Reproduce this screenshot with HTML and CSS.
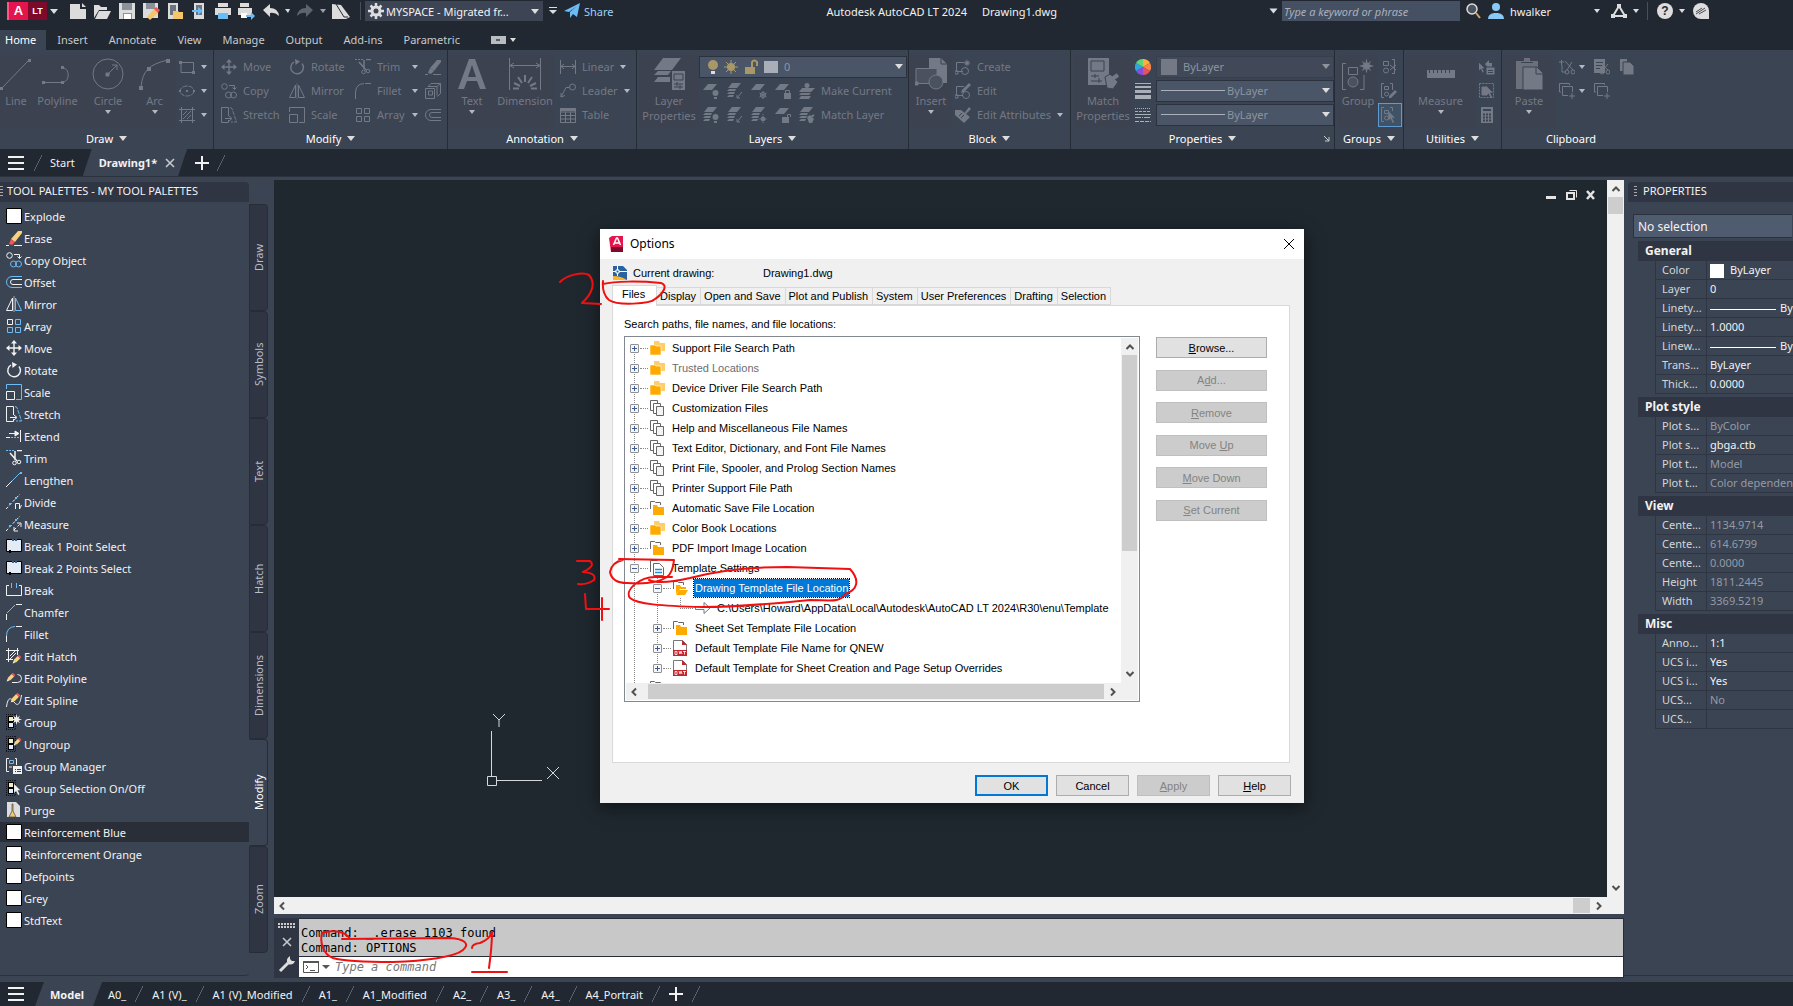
FILE: index.html
```html
<!DOCTYPE html>
<html lang="en">
<head>
<meta charset="utf-8">
<title>Autodesk AutoCAD LT 2024 - Drawing1.dwg</title>
<link rel="stylesheet" href="styles.css">
</head>
<body>
<svg class="defs" aria-hidden="true">
  <symbol id="erase" viewBox="0 0 16 16"><path d="M5 9 12 1l4 0v2L9 12z" fill="var(--pencil)" stroke="none"/><path d="M5 9l4 3-3 3-3-1z" fill="var(--tip)" stroke="none"/><path d="M0 15.500h3M8 15.500h8"/></symbol>
  <symbol id="copy" viewBox="0 0 16 16"><circle cx="3.500" cy="3.500" r="2.800"/><path d="M8 2.500h5.500V6M11.500 4.500l2 2 2-2"/><g stroke="var(--blue)"><circle cx="7.500" cy="12" r="3"/><circle cx="12.500" cy="12" r="3"/></g></symbol>
  <symbol id="offset" viewBox="0 0 16 16"><path d="M16 2.500H6a5.500 5.500 0 0 0 0 11h10" stroke="var(--blue)"/><path d="M16 5.500H7a2.500 2.500 0 0 0 0 5h9"/></symbol>
  <symbol id="mirror" viewBox="0 0 16 16"><path d="M6.500 2v12.500h-6z"/><path d="M9.500 2v12.500h6z" stroke="var(--blue)"/><path d="M8 0v16" stroke-width=".6"/></symbol>
  <symbol id="array" viewBox="0 0 16 16"><path d="M1.500 1.500h5v5h-5z"/><path d="M9.500 1.500h5v5h-5zM1.500 9.500h5v5h-5zM9.500 9.500h5v5h-5z" stroke="var(--blue)"/></symbol>
  <symbol id="move" viewBox="0 0 16 16"><path d="M8 2v12M2 8h12" stroke-width="1.400"/><path d="M8 0l3 3.500H5zM8 16l3-3.500H5zM0 8l3.500-3v6zM16 8l-3.500-3v6z" fill="currentColor" stroke="none"/></symbol>
  <symbol id="rotate" viewBox="0 0 16 16"><path d="M5 3a6.300 6.300 0 1 0 8 1.500" stroke-width="1.400"/><path d="M6 0l5 2.500L6.500 6z" fill="currentColor" stroke="none"/></symbol>
  <symbol id="scale" viewBox="0 0 16 16"><path d="M.5 5V.5h15v15H10" stroke="var(--blue)"/><path d="M.5 7.500h8v8h-8z"/></symbol>
  <symbol id="stretch" viewBox="0 0 16 16"><path d="M7.500 9V.5h-7v15h7V13M4 11.500h6M8 9l3 2.500L8 14"/><path d="M9 .5l2 1 4.500 13.500H10" stroke="var(--blue)" stroke-dasharray="4 1"/></symbol>
  <symbol id="extend" viewBox="0 0 16 16"><path d="M14.500 2v12M3 5.500h7M0 9.500h4"/><path d="M9 3l4 2.500L9 8z" fill="currentColor"/><path d="M5 9.500h8" stroke="var(--blue)" stroke-dasharray="2 1"/></symbol>
  <symbol id="trim" viewBox="0 0 16 16"><path d="M0 .5h8" stroke="var(--blue)" stroke-dasharray="2 1"/><path d="M11 .5h5M4 3l7 8M9 1v9" stroke-width="1.500"/><circle cx="8.500" cy="13" r="1.800"/><circle cx="13" cy="12" r="1.800"/></symbol>
  <symbol id="lengthen" viewBox="0 0 16 16"><path d="M0 15l6-6"/><path d="M6 9l8-8" stroke="var(--blue)"/><path d="M14 0h2v2h-2z" fill="var(--blue)" stroke="none"/></symbol>
  <symbol id="divide" viewBox="0 0 16 16"><path d="M0 15L14 0" stroke-dasharray="3 2"/><path d="M9 3h2v2H9zM3 9h2v2H3z" fill="var(--blue)" stroke="none"/><path d="M9.500 15V9.500h4V15l2-4"/></symbol>
  <symbol id="measure-pt" viewBox="0 0 16 16"><path d="M0 15L14 0M8 14l7-7" stroke-dasharray="3 2"/><path d="M9 3h2v2H9zM3 9h2v2H3z" fill="var(--blue)" stroke="none"/><path d="M8 11v4h4M11 7h4v4"/></symbol>
  <symbol id="script" viewBox="0 0 16 16"><path d="M.5 1.500h15v12H.5z" fill="#e3ecf5" stroke="#000"/><path d="M6 1h2v2H6zM9 1h2v2H9z" fill="#31628f" stroke="none"/><path d="M3 12h2v3H3z" fill="#000" stroke="none"/></symbol>
  <symbol id="break" viewBox="0 0 16 16"><path d="M3 3.500H.5v10h15v-10H13"/><path d="M5.500 1v5M10.500 1v5" stroke="var(--blue)"/></symbol>
  <symbol id="chamfer" viewBox="0 0 16 16"><path d="M.5 16v-6M10 .5h6"/><path d="M1 9l8-8" stroke="var(--blue)"/></symbol>
  <symbol id="fillet" viewBox="0 0 16 16"><path d="M.5 16v-6M10 .5h6"/><path d="M.5 10Q.5 1 9 .5" stroke="var(--blue)"/></symbol>
  <symbol id="pencil" viewBox="0 0 16 16"><path d="M2 14l1-5 6-6 4 4-6 6z" fill="var(--pencil)" stroke="none"/><path d="M9 3l2-2 4 4-2 2z" fill="var(--tip)" stroke="none"/><path d="M1 15l1.500-3.500L5 14z" fill="currentColor" stroke="none"/></symbol>
  <symbol id="edit-hatch" viewBox="0 0 16 16"><path d="M2.500 0v14M0 2.500h13M11.500 0v7M0 11.500h7M4 8l5-5M4 11l6-6"/><use href="#pencil" x="6" y="6" width="10" height="10"/></symbol>
  <symbol id="edit-poly" viewBox="0 0 16 16"><path d="M6 12.500h5.500a4 4 0 0 0 0-8"/><use href="#pencil" x="0" y="2" width="10" height="10"/></symbol>
  <symbol id="edit-spline" viewBox="0 0 16 16"><path d="M.5 15C2 4 5 6 8 10s6 4 7.500-7"/><use href="#pencil" x="4" y="0" width="11" height="11"/></symbol>
  <symbol id="groupbase" viewBox="0 0 16 16"><path d="M0 .5h10M0 15.500h10M.5 0v16M9.500 0v16" stroke="#11151b" stroke-dasharray="1 1"/><path d="M2 2h6v12H2z" fill="#000" stroke="none"/><path d="M3 3h4v4H3z" fill="#f4ecc0" stroke="none"/><path d="M3 9h4v4H3z" fill="#dfeefa" stroke="none"/></symbol>
  <symbol id="star" viewBox="0 0 16 16"><path d="M8 0l1.300 5L13 2.500 11 6.500l5 1.500-5 1.500 2 4L9.300 11 8 16l-1.300-5L3 13.500l2-4L0 8l5-1.500-2-4L6.700 5z" fill="currentColor" stroke="none"/></symbol>
  <symbol id="cursor" viewBox="0 0 16 16"><path d="M3 0v13l3-3 3 6 2-1-3-6h4z" fill="currentColor" stroke="none"/></symbol>
  <symbol id="grp" viewBox="0 0 16 16"><use href="#groupbase"/><use href="#star" x="5" y="0" width="11" height="11"/></symbol>
  <symbol id="ungrp" viewBox="0 0 16 16"><use href="#groupbase"/><use href="#pencil" x="7" y="0" width="9" height="11"/></symbol>
  <symbol id="grpman" viewBox="0 0 16 16"><path d="M3 .5H.5v13H3M9 .5h1.500V7"/><path d="M3.500 2.500h4v3h-4z" stroke="var(--blue)"/><path d="M3 9h3"/><path d="M7 8h9v8H7z" fill="currentColor" stroke="none"/><path d="M9 11.500h1M11 11.500h4M9 13.500h1M11 13.500h4" stroke="#3b4453"/></symbol>
  <symbol id="grpsel" viewBox="0 0 16 16"><use href="#groupbase"/><use href="#cursor" x="6" y="4" width="11" height="11"/></symbol>
  <symbol id="purge" viewBox="0 0 16 16"><path d="M1 0h9l4 4v11H1z" fill="#ddd" stroke="none"/><path d="M6 2v7l-3 6h7L7 9V2z" fill="#f6c667" stroke="#3b4453" stroke-width=".7"/></symbol>
  <symbol id="swatch" viewBox="0 0 16 16"><path d="M.5.5h15v15H.5z" fill="#fff" stroke="#000"/></symbol>

  <symbol id="line" viewBox="0 0 32 32"><path d="M1 31L29 2"/><path d="M0 29h3v3H0zM28 1h3v3h-3z" fill="currentColor" stroke="none"/></symbol>
  <symbol id="polyline" viewBox="0 0 32 32"><path d="M1 24.500h20a8 8 0 0 0 0-15"/><path d="M0 23h3v3H0zM19 23h3v3h-3zM19 8h3v3h-3z" fill="currentColor" stroke="none"/></symbol>
  <symbol id="circle" viewBox="0 0 32 32"><circle cx="16" cy="16" r="15"/><path d="M16 16l9-9M25 7v5M25 7h-5"/><path d="M14 15h3v3h-3z" fill="currentColor"/></symbol>
  <symbol id="arc" viewBox="0 0 32 32"><path d="M2 29Q3 17 9 11T29 2"/><path d="M0 28h4v4H0zM8 9h4v4H8zM27 1h4v4h-4z" fill="currentColor" stroke="none"/></symbol>
  <symbol id="rect" viewBox="0 0 16 16"><path d="M2 3.500h12.500V13"/><path d="M2 4v9.500h12"/><path d="M0 2h3v3H0zM13 12h3v3h-3z" fill="currentColor" stroke="none"/></symbol>
  <symbol id="ellipse" viewBox="0 0 16 16"><ellipse cx="8" cy="8" rx="7" ry="5" stroke-dasharray="5 1"/><path d="M7 7h2v2H7zM0 7h2v2H0zM14 7h2v2h-2z" fill="currentColor" stroke="none"/></symbol>
  <symbol id="hatch" viewBox="0 0 16 16"><path d="M2.500 0v16M13.500 0v16M0 2.500h16M0 13.500h16M4 8l4-4M4 12l8-8M8 12l4-4"/></symbol>
  <symbol id="explode" viewBox="0 0 16 16"><path d="M.5 5.500h9v10h-9zM3 3.500l3-3h9.500v10l-3 3M3 3.500h9v9M12 3.500l3.500-3M3.500 8h4v4h-4z"/></symbol>
  <symbol id="bigtext" viewBox="0 0 32 32"><path d="M13 1h6l11 30h-6l-3-8H11l-3 8H2zM16 7l-4 12h8z" fill="currentColor" fill-rule="evenodd" stroke="none"/></symbol>
  <symbol id="dimension" viewBox="0 0 32 32"><path d="M.5 0v32M31.500 0v32M1 7.500h30M5 5L1 7.500 5 10M27 5l4 2.500L27 10"/><path d="M16 17v7M9 19l4 6M23 19l-4 6M5 25l6 3M27 25l-6 3M4 30.500h6M22 30.500h6" stroke-width="2"/></symbol>
  <symbol id="linear" viewBox="0 0 16 16"><path d="M.5 1v14M15.500 1v14M1 7.500h14M4 5L1 7.500 4 10M12 5l3 2.500L12 10"/></symbol>
  <symbol id="leader" viewBox="0 0 16 16"><circle cx="12.500" cy="4" r="3"/><path d="M9 4.500H6L1 14M1 10v4l4-1.500"/></symbol>
  <symbol id="table" viewBox="0 0 16 16"><path d="M.5 1.500h15v14H.5zM0 5h16M0 8.500h16M0 12h16M5.500 5v10M10.500 5v10"/><path d="M0 1h16v3H0z" fill="currentColor" stroke="none"/></symbol>
  <symbol id="layerprops" viewBox="0 0 32 32"><path d="M10 0h18l-9 12H1zM5 13h13l-3 4H1zM5 19h12v5H1z" fill="currentColor" stroke="none"/><path d="M19 13h13v19H19z" fill="currentColor" stroke="none"/><path d="M21 16h9v6h-9zM21 26h9M21 29h9M24 24v4M27 27v4" stroke="#3b4453"/></symbol>
  <symbol id="layer" viewBox="0 0 16 16"><path d="M5 1h9L9 7H0z" fill="currentColor" stroke="none"/><circle cx="12.500" cy="10" r="3" fill="currentColor" stroke="none"/><path d="M11 15h3" stroke-width="2"/></symbol>
  <symbol id="layerfrz" viewBox="0 0 16 16"><path d="M5 1h9L9 7H0z" fill="currentColor" stroke="none"/><path d="M12 8v8M8.500 10l7 4M15.500 10l-7 4"/><circle cx="12" cy="12" r="2.500"/></symbol>
  <symbol id="layers" viewBox="0 0 16 16"><path d="M5 0h9l-4 5H1zM2 6h7l-1 2H0zM2 9h6l-1 2H0zM2 12h5l-1 2H0z" fill="currentColor" stroke="none"/><path d="M15 9l-5 6M10 12v3h3"/></symbol>
  <symbol id="layerson" viewBox="0 0 16 16"><path d="M5 0h9l-4 5H1zM2 6h7l-1 2H0zM2 9h6l-1 2H0zM2 12h5l-1 2H0z" fill="currentColor" stroke="none"/><circle cx="12.500" cy="10" r="3" fill="currentColor" stroke="none"/><path d="M11 15h3" stroke-width="2"/></symbol>
  <symbol id="layersun" viewBox="0 0 16 16"><path d="M5 0h9l-4 5H1zM2 6h7l-1 2H0zM2 9h6l-1 2H0zM2 12h5l-1 2H0z" fill="currentColor" stroke="none"/><circle cx="12" cy="12" r="2" fill="currentColor"/><path d="M12 7v9M7.500 12h9" stroke-dasharray="1 1"/></symbol>
  <symbol id="layermatch" viewBox="0 0 16 16"><path d="M5 0h9l-4 5H1zM2 6h7l-1 2H0zM2 9h6l-1 2H0zM2 12h5l-1 2H0z" fill="currentColor" stroke="none"/><path d="M8 10l3-2 4 4-2 4h-3z" fill="currentColor" stroke="none"/><path d="M12 10l3-2" stroke-width="2"/></symbol>
  <symbol id="layerlock" viewBox="0 0 16 16"><path d="M5 1h9L9 7H0z" fill="currentColor" stroke="none"/><path d="M9 10h7v6H9z" fill="currentColor" stroke="none"/><path d="M10.500 10V7.500h4V10"/></symbol>
  <symbol id="layerunlock" viewBox="0 0 16 16"><path d="M5 1h9L9 7H0z" fill="currentColor" stroke="none"/><path d="M7 10h7v6H7z" fill="currentColor" stroke="none"/><path d="M12.500 10V7.500h3V10"/></symbol>
  <symbol id="layercur" viewBox="0 0 16 16"><circle cx="8" cy="2.500" r="2.500" fill="currentColor" stroke="none"/><path d="M3 5h13l-4 4H0zM2 10h10l-2 2H0zM2 13h10l-2 3H0z" fill="currentColor" stroke="none"/></symbol>
  <symbol id="insert" viewBox="0 0 32 32"><path d="M14 0h12l6 6v19H14z" fill="currentColor" stroke="none"/><path d="M26 0v6h6" stroke="#3b4453"/><path d="M1 10.500h21v15H1z" fill="#4a515f"/><circle cx="21" cy="24" r="7" fill="#4a515f"/><path d="M0 24h3v3H0z" fill="currentColor"/></symbol>
  <symbol id="create" viewBox="0 0 16 16"><path d="M9 3.500H1.500v9H8M0 12h3v3H0z"/><circle cx="10" cy="12" r="3.500"/><use href="#star" x="8" y="0" width="8" height="8"/></symbol>
  <symbol id="edit" viewBox="0 0 16 16"><path d="M9 3.500H1.500v9H8M0 12h3v3H0zM15 1L7 9"/><circle cx="11" cy="12" r="3.500"/><path d="M14 0l2 2-7 7-3 1 1-3z" fill="currentColor" stroke="none"/></symbol>
  <symbol id="attr" viewBox="0 0 16 16"><path d="M0 3h6l9 7-6 6-9-8z" fill="currentColor" stroke="none"/><path d="M4 9l3-3M6 11l3-3" stroke="#3b4453"/><path d="M14 0l2 2-6 6-2 0z" fill="currentColor" stroke="none"/></symbol>
  <symbol id="match" viewBox="0 0 32 32"><path d="M1 0h21v27H1z" fill="currentColor" stroke="none"/><path d="M4 3h13v10H4zM4 18h8M4 23h11M8 16v4M12 20v5" stroke="#3b4453"/><path d="M18 19l5-3 8 8-5 7-6-1z" fill="currentColor" stroke="#3b4453"/><path d="M25 21l6-4" stroke-width="4"/></symbol>
  <symbol id="wheel" viewBox="0 0 16 16"><g stroke="none"><path d="M8 8V0a8 8 0 0 1 7 4z" fill="#fbb03b"/><path d="M8 8l7-4a8 8 0 0 1 0 8z" fill="#f9844a"/><path d="M8 8l7 4a8 8 0 0 1-7 4z" fill="#e8505b"/><path d="M8 8v8a8 8 0 0 1-7-4z" fill="#8a4be0"/><path d="M8 8l-7 4a8 8 0 0 1 0-8z" fill="#2ba6e0"/><path d="M8 8L1 4a8 8 0 0 1 7-4z" fill="#63d27a"/></g></symbol>
  <symbol id="weights" viewBox="0 0 16 16"><path d="M0 0h16v1H0zM0 3h16v2H0zM0 7h16v3H0zM0 12h16v4H0z" fill="#aab0b8" stroke="none"/></symbol>
  <symbol id="types" viewBox="0 0 16 16"><g stroke="#aab0b8"><path d="M0 1.500h16" stroke-dasharray="1 1"/><path d="M0 4.500h16" stroke-dasharray="3 1"/><path d="M0 7.500h16"/><path d="M0 10.500h16" stroke-dasharray="6 1 1 1"/><path d="M0 14.500h16" stroke-dasharray="4 1"/></g></symbol>
  <symbol id="group" viewBox="0 0 32 32"><path d="M4 5.500H.5v26H4M18 31.500h4V17"/><path d="M6.500 9.500h9v7h-9z"/><circle cx="11" cy="24" r="5" fill="#4a515f"/><use href="#star" x="17" y="0" width="15" height="16"/></symbol>
  <symbol id="g1" viewBox="0 0 16 16"><path d="M2.500 2.500h5v4h-5zM11 .5h2.500v14H11M9 6l6 5M9 11l6-5"/><circle cx="5" cy="11.500" r="2.500"/></symbol>
  <symbol id="g2" viewBox="0 0 16 16"><path d="M3 .5H.5v14H3M3.500 3.500h4v3h-4zM9 .5h2.500V7"/><circle cx="5.500" cy="11" r="2"/><path d="M14 7l2 2-6 6H8v-2z" fill="currentColor" stroke="none"/></symbol>
  <symbol id="g3" viewBox="0 0 16 16"><path d="M3 .5H.5v14H3M3.500 3.500h4v3h-4zM9 .5h2.500V4"/><circle cx="5.500" cy="11" r="2"/><use href="#cursor" x="5" y="4" width="12" height="12"/></symbol>
  <symbol id="ruler" viewBox="0 0 32 32"><path d="M2 12h28v8H2z" fill="currentColor" stroke="none"/><path d="M4.500 12v3M8.500 12v3M12.500 12v3M16.500 12v3M20.500 12v3M24.500 12v3" stroke="#3b4453"/></symbol>
  <symbol id="u1" viewBox="0 0 16 16"><path d="M6 5L10 1v3h3v5H9z" fill="currentColor" stroke="none"/><path d="M7 8h9v8H7z" fill="currentColor" stroke="#3b4453"/><path d="M9 11.500h5M9 13.500h5" stroke="#3b4453"/><use href="#cursor" x="-2" y="3" width="10" height="11"/></symbol>
  <symbol id="u2" viewBox="0 0 16 16"><path d="M.5.500h14v14H.5z" stroke-dasharray="2 1"/><path d="M3 4h5v8H3z" fill="currentColor"/><use href="#cursor" x="5" y="3" width="12" height="12"/></symbol>
  <symbol id="calc" viewBox="0 0 16 16"><path d="M2 0h12v16H2z" fill="currentColor" stroke="none"/><path d="M4 3h8" stroke="#3b4453" stroke-width="2"/><path d="M4 7.500h8M4 10.500h8M4 13.500h8" stroke="#3b4453" stroke-width="2" stroke-dasharray="2 1"/></symbol>
  <symbol id="paste" viewBox="0 0 32 32"><path d="M3 3h8V0h6v3h8v28H3z" fill="#6b707b" stroke="none"/><path d="M10 9h14l6 6v17H10z" fill="currentColor" stroke="#3b4453"/><path d="M23 9v7h7M8 4.500h12" stroke="#3b4453"/></symbol>
  <symbol id="cut" viewBox="0 0 16 16"><path d="M0 3h5M2.500 1v5M3 6v7h4M6 2l8 9M13 3l-5 8"/><circle cx="8" cy="13" r="2"/><circle cx="14" cy="13" r="2"/></symbol>
  <symbol id="cut2" viewBox="0 0 16 16"><path d="M0 0h11v14H0z" fill="currentColor" stroke="none"/><path d="M2 3.500h7M2 6.500h7M2 9.500h4" stroke="#3b4453"/><path d="M7 5l7 6M14 5l-5 6"/><circle cx="8" cy="13" r="2"/><circle cx="14" cy="13" r="2"/></symbol>
  <symbol id="copies" viewBox="0 0 16 16"><path d="M1 0h7v12H1z" fill="currentColor" stroke="none"/><path d="M4 3h7l4 4v9H4z" fill="currentColor" stroke="#3b4453"/></symbol>
  <symbol id="copyclip" viewBox="0 0 16 16"><path d="M2 9H.5V.5h10V2"/><path d="M3.500 3.500h10V9M3.500 3.500v9H9M13 10v6M10 13h6"/></symbol>

  <symbol id="x" viewBox="0 0 10 10"><path d="M1 1l8 8M9 1L1 9" stroke-width="1.600"/></symbol>
  <symbol id="plus" viewBox="0 0 16 16"><path d="M8 1v14M1 8h14" stroke-width="2"/></symbol>
  <symbol id="menu" viewBox="0 0 16 16"><path d="M0 2h16M0 8h16M0 14h16" stroke-width="2"/></symbol>
  <symbol id="chev" viewBox="0 0 10 10"><path d="M1.500 7L5 3.500 8.500 7" stroke="#505050" stroke-width="2"/></symbol>

  <symbol id="t-folders" viewBox="0 0 16 16"><path d="M4 1h5l1 2h5v8H4z" fill="#ffce6b" stroke="none"/><path d="M0 5h5l1 1h5v9H0z" fill="#fa0" stroke="#fff" stroke-width=".6"/></symbol>
  <symbol id="t-pages" viewBox="0 0 16 16"><g fill="#fff" stroke="#666"><path d="M.5.500h7v10h-7z"/><path d="M3.500 3.500h7v10h-7z"/><path d="M6.500 6.500h7v9h-7z" fill="#f4f4f4"/></g></symbol>
  <symbol id="t-folder" viewBox="0 0 16 16"><path d="M.5 9V1.500h4l1 1h5V5" stroke="#666"/><path d="M3 5h4l1 2h6v8H3z" fill="#fa0" stroke="none"/></symbol>
  <symbol id="t-doc" viewBox="0 0 16 16"><path d="M.5 12V.5h7" stroke="#666"/><path d="M3.500 3.500h6l4 4v8h-10z" fill="#fff" stroke="#666"/><path d="M5 9.500h7M5 12.500h7" stroke="#2a8dd4" stroke-width="1.500"/></symbol>
  <symbol id="t-open" viewBox="0 0 16 16"><path d="M.5 9V1.500h4l1 1h5V5" stroke="#666"/><path d="M3 5h4l1 2h5v2H7l-4 5z" fill="#fa0" stroke="none"/><path d="M6 10h9l-3 5H3z" fill="#fa0" stroke="none"/></symbol>
  <symbol id="t-arrow" viewBox="0 0 16 16"><path d="M.5 6.500H9v-4l6 5.500-6 5.500v-4H.5z" fill="#fff" stroke="#777"/></symbol>
  <symbol id="t-dwt" viewBox="0 0 16 16"><path d="M.5.500h9l4 4V11H.5z" fill="#fff" stroke="#777"/><path d="M9 0l5 5H9zM0 10h14v6H0z" fill="#c4262e" stroke="none"/><path d="M2 11.500v3h2v-3zM6 11l1 3 1-3 1 3M10 11.500h3M11.500 11v3.500" stroke="#fff" stroke-width=".8"/></symbol>
</svg>

<header class="titlebar">
  <button class="app" aria-label="Application menu"><b>A</b><i>LT</i></button>
  <span class="tri app-tri"></span>
  <div class="quick">
    <svg class="q1" viewBox="0 0 220 18" role="img" aria-label="Quick access tools">
      <g fill="#dcdcdc"><path d="M0 2h10v5h6v10H0zM12 1l4 4h-4z"/><path d="M24 3h5l2 2h6v3h-8l-5 8zM29 9h12l-4 8H25z"/>
      <path d="M49 1h16v16H49z"/><path d="M52 1h10v7H52zM53 11h9v6h-9z" fill="#8b929c"/><path d="M54 12h7v5h-7z" fill="#fff"/>
      <path d="M73 1h15v15H73z"/><path d="M76 1h9v6h-9z" fill="#8b929c"/><path d="M77 15l7-8 4 4-8 7z" fill="#f6c667"/><path d="M84 7l2-2 4 3-2 3z" fill="#f2555a"/>
      <path d="M98 1h10v16H98z"/><path d="M100 3h6v10h-6z" fill="#6d7480"/><path d="M103 9h5l1 1h4v7h-10z" fill="#f6c667"/>
      <path d="M124 1h10v16h-10z"/><path d="M126 3h6v10h-6z" fill="#6d7480"/><path d="M122 8h6V5l5 4-5 4v-3h-6z" fill="#6cbcf5"/>
      <path d="M148 1h10v4h-10zM145 6h16v7h-16z"/><path d="M148 11h10v6h-10z" fill="#6cbcf5"/>
      <path d="M170 1h9v4h-9zM168 6h14v7h-14z"/><path d="M171 11h6v5h-6z" fill="#fff"/><path d="M176 13h5v-3l4 4-4 4v-3h-5z" fill="#6cbcf5"/>
      <path d="M193 8l7-6v4q8 0 9 8-4-4-9-3v4z"/></g><path d="M215 7h5l-2 4z" fill="#dcdcdc"/></svg>
    <svg class="q2" viewBox="0 0 56 18" aria-hidden="true"><path d="M17 8l-7-6v4Q2 6 1 14q4-4 9-3v4z" fill="#5d6470"/><path d="M24 7h6l-3 4z" fill="#9aa0a8"/><path d="M36 2l9 1 9 12-4 2H36z" fill="#dcdcdc"/><path d="M40 2l8 13 4 0" stroke="#222831" fill="none"/></svg>
  </div>
  <button class="workspace"><svg viewBox="0 0 16 16" class="i16" aria-hidden="true"><circle cx="8" cy="8" r="4" fill="none" stroke="#ddd" stroke-width="3"/><path d="M8 0v16M0 8h16M2.500 2.500l11 11M13.500 2.500l-11 11" stroke="#ddd" stroke-width="2.500"/><circle cx="8" cy="8" r="2.500" fill="#3d4454"/></svg><span>MYSPACE - Migrated fr...</span><i class="tri"></i></button>
  <svg class="bar" viewBox="0 0 8 8" aria-hidden="true"><path d="M0 0h8v1H0zM0 3h8L4 7z" fill="#ddd"/></svg>
  <a class="share" href="#share"><svg viewBox="0 0 16 16" class="i16" aria-hidden="true"><path d="M0 8L16 0l-3 14-4-3-3 4V9l7-6-8 6z" fill="#6cbcf5"/></svg>Share</a>
  <h1><span>Autodesk AutoCAD LT 2024</span><span>Drawing1.dwg</span></h1>
  <div class="account">
    <i class="tri right"></i>
    <input class="search" type="text" aria-label="Search" placeholder="Type a keyword or phrase">
    <svg viewBox="0 0 16 16" class="i16" aria-hidden="true"><circle cx="6" cy="6" r="5" fill="#4b5260" stroke="#ddd" stroke-width="1.500"/><path d="M10 10l4 5" stroke="#d9a860" stroke-width="2"/></svg>
    <svg viewBox="0 0 16 16" class="i16" aria-hidden="true"><circle cx="8" cy="4" r="4" fill="#8ac8f5"/><path d="M0 16q0-5 6-6h4q6 1 6 6z" fill="#8ac8f5"/></svg>
    <span class="name">hwalker</span><i class="tri"></i>
    <svg viewBox="0 0 16 16" class="i16 ads" aria-hidden="true"><path d="M8 3L2 13h12z" fill="none" stroke="#ddd" stroke-width="2"/><path d="M6 1h4v4H6zM0 11h4v4H0zM12 11h4v4h-4z" fill="#ddd"/></svg><i class="tri"></i>
    <span class="vsep"></span>
    <span class="help">?</span><i class="tri"></i>
    <svg viewBox="0 0 16 16" class="i16 last" aria-hidden="true"><path d="M0 8a8 8 0 1 1 16 0v8H8a8 8 0 0 1-8-8z" fill="#ddd"/><path d="M3 9l6-4M3 11l9-6M6 11l7-4" stroke="#444b57"/></svg>
  </div>
</header>

<nav class="menu" aria-label="Ribbon tabs">
  <a class="on" href="#home">Home</a><a href="#insert">Insert</a><a href="#annotate">Annotate</a><a href="#view">View</a><a href="#manage">Manage</a><a href="#output">Output</a><a href="#addins">Add-ins</a><a href="#parametric">Parametric</a><span class="mini"></span><span class="tri"></span>
</nav>

<section class="ribbon" aria-label="Ribbon">
  <div class="panel draw">
    <div class="tools">
      <button class="big"><svg class="i32"><use href="#line"/></svg>Line</button>
      <button class="big"><svg class="i32"><use href="#polyline"/></svg>Polyline</button>
      <button class="big"><svg class="i32"><use href="#circle"/></svg>Circle<i class="tri"></i></button>
      <button class="big"><svg class="i32"><use href="#arc"/></svg>Arc<i class="tri"></i></button>
      <div class="col">
        <button aria-label="Rectangle"><svg class="i16"><use href="#rect"/></svg><i class="tri"></i></button>
        <button aria-label="Ellipse"><svg class="i16"><use href="#ellipse"/></svg><i class="tri"></i></button>
        <button aria-label="Hatch"><svg class="i16"><use href="#hatch"/></svg><i class="tri"></i></button>
      </div>
    </div>
    <h2>Draw<i class="tri"></i></h2>
  </div>
  <div class="panel modify">
    <div class="tools">
      <div class="col">
        <button><svg class="i16"><use href="#move"/></svg>Move</button>
        <button><svg class="i16"><use href="#copy"/></svg>Copy</button>
        <button><svg class="i16"><use href="#stretch"/></svg>Stretch</button>
      </div>
      <div class="col">
        <button><svg class="i16"><use href="#rotate"/></svg>Rotate</button>
        <button><svg class="i16"><use href="#mirror"/></svg>Mirror</button>
        <button><svg class="i16"><use href="#scale"/></svg>Scale</button>
      </div>
      <div class="col end">
        <button><svg class="i16"><use href="#trim"/></svg>Trim<i class="tri"></i></button>
        <button><svg class="i16"><use href="#fillet"/></svg>Fillet<i class="tri"></i></button>
        <button><svg class="i16"><use href="#array"/></svg>Array<i class="tri"></i></button>
      </div>
      <div class="col">
        <button aria-label="Erase"><svg class="i16"><use href="#erase"/></svg></button>
        <button aria-label="Explode"><svg class="i16"><use href="#explode"/></svg></button>
        <button aria-label="Offset"><svg class="i16"><use href="#offset"/></svg></button>
      </div>
    </div>
    <h2>Modify<i class="tri"></i></h2>
  </div>
  <div class="panel annot">
    <div class="tools">
      <button class="big"><svg class="i32"><use href="#bigtext"/></svg>Text<i class="tri"></i></button>
      <button class="big"><svg class="i32"><use href="#dimension"/></svg>Dimension</button>
      <div class="col">
        <button><svg class="i16"><use href="#linear"/></svg>Linear<i class="tri"></i></button>
        <button><svg class="i16"><use href="#leader"/></svg>Leader<i class="tri"></i></button>
        <button><svg class="i16"><use href="#table"/></svg>Table</button>
      </div>
    </div>
    <h2>Annotation<i class="tri"></i></h2>
  </div>
  <div class="panel layer">
    <div class="tools">
      <button class="big"><svg class="i32"><use href="#layerprops"/></svg>Layer<br>Properties</button>
      <div class="col">
        <button class="combo" aria-label="Layer 0"><svg viewBox="0 0 74 18" class="state"><g fill="#a89868"><circle cx="9" cy="7" r="5"/><path d="M7 13h4v3H7z" fill="#ddd"/><circle cx="27" cy="9" r="4"/><path d="M27 2v14M20 9h14M22 4l10 10M32 4L22 14" stroke="#a89868"/><path d="M41 9h10v7H41z"/><path d="M48 9V4q2-3 5 0v4" fill="none" stroke="#a89868" stroke-width="2"/></g><path d="M60 3h14v12H60z" fill="#a9aeb8"/></svg><span>0</span><i class="tri"></i></button>
        <div class="row">
          <button aria-label="Off"><svg class="i16"><use href="#layer"/></svg></button><button aria-label="Isolate"><svg class="i16"><use href="#layers"/></svg></button><button aria-label="Freeze"><svg class="i16"><use href="#layerfrz"/></svg></button><button aria-label="Lock"><svg class="i16"><use href="#layerlock"/></svg></button><button><svg class="i16"><use href="#layercur"/></svg>Make Current</button>
        </div>
        <div class="row">
          <button aria-label="Turn all on"><svg class="i16"><use href="#layerson"/></svg></button><button aria-label="Unisolate"><svg class="i16"><use href="#layers"/></svg></button><button aria-label="Thaw"><svg class="i16"><use href="#layersun"/></svg></button><button aria-label="Unlock"><svg class="i16"><use href="#layerunlock"/></svg></button><button><svg class="i16"><use href="#layermatch"/></svg>Match Layer</button>
        </div>
      </div>
    </div>
    <h2>Layers<i class="tri"></i></h2>
  </div>
  <div class="panel block">
    <div class="tools">
      <button class="big"><svg class="i32"><use href="#insert"/></svg>Insert<i class="tri"></i></button>
      <div class="col">
        <button><svg class="i16"><use href="#create"/></svg>Create</button>
        <button><svg class="i16"><use href="#edit"/></svg>Edit</button>
        <button><svg class="i16"><use href="#attr"/></svg>Edit Attributes<i class="tri"></i></button>
      </div>
    </div>
    <h2>Block<i class="tri"></i></h2>
  </div>
  <div class="panel props">
    <div class="tools">
      <button class="big"><svg class="i32"><use href="#match"/></svg>Match<br>Properties</button>
      <div class="col">
        <button aria-label="Object color"><svg class="i16"><use href="#wheel"/></svg></button>
        <button aria-label="Lineweight"><svg class="i16"><use href="#weights"/></svg></button>
        <button aria-label="Linetype"><svg class="i16"><use href="#types"/></svg></button>
      </div>
      <div class="col">
        <button class="combo off"><i class="sw"></i><span>ByLayer</span><i class="tri"></i></button>
        <button class="combo"><i class="ln"></i><span>ByLayer</span><i class="tri"></i></button>
        <button class="combo"><i class="ln"></i><span>ByLayer</span><i class="tri"></i></button>
      </div>
    </div>
    <h2>Properties<i class="tri"></i><svg class="corner" viewBox="0 0 6 6" aria-hidden="true"><path d="M0 0l5 5M5 1v4H1" fill="none" stroke="#ccc"/></svg></h2>
  </div>
  <div class="panel groups">
    <div class="tools">
      <button class="big"><svg class="i32"><use href="#group"/></svg>Group</button>
      <div class="col">
        <button aria-label="Ungroup"><svg class="i16"><use href="#g1"/></svg></button>
        <button aria-label="Group edit"><svg class="i16"><use href="#g2"/></svg></button>
        <button class="sel" aria-label="Group selection"><svg class="i16"><use href="#g3"/></svg></button>
      </div>
    </div>
    <h2>Groups<i class="tri"></i></h2>
  </div>
  <div class="panel utils">
    <div class="tools">
      <button class="big"><svg class="i32"><use href="#ruler"/></svg>Measure<i class="tri"></i></button>
      <div class="col">
        <button aria-label="Quick select"><svg class="i16"><use href="#u1"/></svg></button>
        <button aria-label="Select all"><svg class="i16"><use href="#u2"/></svg></button>
        <button aria-label="Calculator"><svg class="i16"><use href="#calc"/></svg></button>
      </div>
    </div>
    <h2>Utilities<i class="tri"></i></h2>
  </div>
  <div class="panel clip">
    <div class="tools">
      <button class="big"><svg class="i32"><use href="#paste"/></svg>Paste<i class="tri"></i></button>
      <div class="col">
        <div class="row"><button aria-label="Cut"><svg class="i16"><use href="#cut"/></svg><i class="tri"></i></button><button aria-label="Cut base"><svg class="i16"><use href="#cut2"/></svg></button><button aria-label="Copy link"><svg class="i16"><use href="#copies"/></svg></button></div>
        <div class="row"><button aria-label="Copy clip"><svg class="i16"><use href="#copyclip"/></svg><i class="tri"></i></button><button aria-label="Copy base"><svg class="i16"><use href="#copyclip"/></svg></button></div>
      </div>
    </div>
    <h2>Clipboard</h2>
  </div>
</section>

<nav class="tabs" aria-label="Files">
  <button class="burger" aria-label="File menu"><svg class="i16"><use href="#menu"/></svg></button>
  <i class="slash"></i><a href="#start">Start</a><a class="on" href="#drawing1">Drawing1*<svg class="x"><use href="#x"/></svg></a>
  <button aria-label="New drawing"><svg class="i16"><use href="#plus"/></svg></button><i class="slash"></i>
</nav>

<main class="work">
  <aside class="palette">
    <div class="pal-main">
      <h2 class="grip"><i></i>TOOL PALETTES - MY TOOL PALETTES</h2>
      <ul>
        <li><svg class="i16"><use href="#swatch"/></svg>Explode</li>
        <li><svg class="i16"><use href="#erase"/></svg>Erase</li>
        <li><svg class="i16"><use href="#copy"/></svg>Copy Object</li>
        <li><svg class="i16"><use href="#offset"/></svg>Offset</li>
        <li><svg class="i16"><use href="#mirror"/></svg>Mirror</li>
        <li><svg class="i16"><use href="#array"/></svg>Array</li>
        <li><svg class="i16"><use href="#move"/></svg>Move</li>
        <li><svg class="i16"><use href="#rotate"/></svg>Rotate</li>
        <li><svg class="i16"><use href="#scale"/></svg>Scale</li>
        <li><svg class="i16"><use href="#stretch"/></svg>Stretch</li>
        <li><svg class="i16"><use href="#extend"/></svg>Extend</li>
        <li><svg class="i16"><use href="#trim"/></svg>Trim</li>
        <li><svg class="i16"><use href="#lengthen"/></svg>Lengthen</li>
        <li><svg class="i16"><use href="#divide"/></svg>Divide</li>
        <li><svg class="i16"><use href="#measure-pt"/></svg>Measure</li>
        <li><svg class="i16"><use href="#script"/></svg>Break 1 Point Select</li>
        <li><svg class="i16"><use href="#script"/></svg>Break 2 Points Select</li>
        <li><svg class="i16"><use href="#break"/></svg>Break</li>
        <li><svg class="i16"><use href="#chamfer"/></svg>Chamfer</li>
        <li><svg class="i16"><use href="#fillet"/></svg>Fillet</li>
        <li><svg class="i16"><use href="#edit-hatch"/></svg>Edit Hatch</li>
        <li><svg class="i16"><use href="#edit-poly"/></svg>Edit Polyline</li>
        <li><svg class="i16"><use href="#edit-spline"/></svg>Edit Spline</li>
        <li><svg class="i16"><use href="#grp"/></svg>Group</li>
        <li><svg class="i16"><use href="#ungrp"/></svg>Ungroup</li>
        <li><svg class="i16"><use href="#grpman"/></svg>Group Manager</li>
        <li><svg class="i16"><use href="#grpsel"/></svg>Group Selection On/Off</li>
        <li><svg class="i16"><use href="#purge"/></svg>Purge</li>
        <li class="sel"><svg class="i16"><use href="#swatch"/></svg>Reinforcement Blue</li>
        <li><svg class="i16"><use href="#swatch"/></svg>Reinforcement Orange</li>
        <li><svg class="i16"><use href="#swatch"/></svg>Defpoints</li>
        <li><svg class="i16"><use href="#swatch"/></svg>Grey</li>
        <li><svg class="i16"><use href="#swatch"/></svg>StdText</li>
      </ul>
    </div>
    <div class="vtabs">
      <button>Draw</button><button>Symbols</button><button>Text</button><button>Hatch</button><button>Dimensions</button><button class="on">Modify</button><button>Zoom</button>
    </div>
  </aside>

  <section class="center">
    <div class="view">
      <div class="canvas">
        <div class="mdi"><svg viewBox="0 0 56 12" aria-hidden="true"><path d="M1 7h10v3H1z" fill="#e4e4e4"/><path d="M24.500 1.500h7v7" fill="none" stroke="#e4e4e4"/><path d="M22 4h7v6h-7z" fill="none" stroke="#e4e4e4" stroke-width="2"/><path d="M42 2l7 8M49 2l-7 8" stroke="#e4e4e4" stroke-width="2.500"/></svg></div>
        <svg class="ucs" viewBox="0 0 80 80" aria-label="UCS icon"><g fill="none" stroke="#d5d8da"><path d="M4.500 66V21M9 70.500h46M.5 66.500h9v9h-9zM6 4l6 6 6-6M12 10v7M60 57l12 12M72 57L60 69"/></g></svg>

        <section class="dialog" role="dialog" aria-label="Options">
          <header><svg viewBox="0 0 16 16" class="i16" aria-hidden="true"><path d="M0 2l3-2h11v11l-2 5H2z" fill="#e5144c"/><path d="M2 11h12v5H2z" fill="#7d0a2a"/><path d="M4.500 9L7.500 2h1l3 7M6 7h4" stroke="#fff" stroke-width="1.500" fill="none"/></svg>Options<button class="close" aria-label="Close"><svg viewBox="0 0 12 12"><path d="M1 1l10 10M11 1L1 11" stroke="#000"/></svg></button></header>
          <div class="current"><svg viewBox="0 0 14 14" aria-hidden="true"><path d="M0 0h10l4 4v10H0z" fill="#2a62a0"/><path d="M0 10q8 0 14 4H0z" fill="#fbb622"/><path d="M4.500 0v10M0 5.500h14" stroke="#fff"/><path d="M3 4h3v3H3z" fill="#2a62a0" stroke="#fff"/></svg><span>Current drawing:</span><span>Drawing1.dwg</span></div>
          <div class="dtabs" role="tablist"><button class="on">Files</button><button>Display</button><button>Open and Save</button><button>Plot and Publish</button><button>System</button><button>User Preferences</button><button>Drafting</button><button>Selection</button></div>
          <div class="page">
            <p>Search paths, file names, and file locations:</p>
            <div class="cols">
              <div class="tree">
                <div class="tree-top">
                  <ul class="l1">
                    <li><i class="ex"></i><svg class="i16"><use href="#t-folders"/></svg>Support File Search Path</li>
                    <li class="dim"><i class="ex"></i><svg class="i16"><use href="#t-folders"/></svg>Trusted Locations</li>
                    <li><i class="ex"></i><svg class="i16"><use href="#t-folders"/></svg>Device Driver File Search Path</li>
                    <li><i class="ex"></i><svg class="i16"><use href="#t-pages"/></svg>Customization Files</li>
                    <li><i class="ex"></i><svg class="i16"><use href="#t-pages"/></svg>Help and Miscellaneous File Names</li>
                    <li><i class="ex"></i><svg class="i16"><use href="#t-pages"/></svg>Text Editor, Dictionary, and Font File Names</li>
                    <li><i class="ex"></i><svg class="i16"><use href="#t-pages"/></svg>Print File, Spooler, and Prolog Section Names</li>
                    <li><i class="ex"></i><svg class="i16"><use href="#t-pages"/></svg>Printer Support File Path</li>
                    <li><i class="ex"></i><svg class="i16"><use href="#t-folder"/></svg>Automatic Save File Location</li>
                    <li><i class="ex"></i><svg class="i16"><use href="#t-folders"/></svg>Color Book Locations</li>
                    <li><i class="ex"></i><svg class="i16"><use href="#t-folder"/></svg>PDF Import Image Location</li>
                    <li><i class="ex open"></i><svg class="i16"><use href="#t-doc"/></svg>Template Settings</li>
                    <li class="nest"><ul class="l2">
                      <li><i class="ex open"></i><svg class="i16"><use href="#t-open"/></svg><mark>Drawing Template File Location</mark></li>
                      <li class="leaf"><svg class="i16"><use href="#t-arrow"/></svg>C:\Users\Howard\AppData\Local\Autodesk\AutoCAD LT 2024\R30\enu\Template</li>
                      <li><i class="ex"></i><svg class="i16"><use href="#t-folder"/></svg>Sheet Set Template File Location</li>
                      <li><i class="ex"></i><svg class="i16"><use href="#t-dwt"/></svg>Default Template File Name for QNEW</li>
                      <li><i class="ex"></i><svg class="i16"><use href="#t-dwt"/></svg>Default Template for Sheet Creation and Page Setup Overrides</li>
                    </ul></li>
                    <li><i class="ex"></i><svg class="i16"><use href="#t-folder"/></svg></li>
                  </ul>
                  <div class="vs"><svg><use href="#chev"/></svg><i class="thumb"></i><svg class="down"><use href="#chev"/></svg></div>
                </div>
                <div class="hs"><svg class="left"><use href="#chev"/></svg><i class="thumb"></i><svg class="right"><use href="#chev"/></svg></div>
              </div>
              <div class="side">
                <button><span><u>B</u>rowse...</span></button><button disabled><span>A<u>d</u>d...</span></button><button disabled><span><u>R</u>emove</span></button><button disabled><span>Move <u>U</u>p</span></button><button disabled><span><u>M</u>ove Down</span></button><button disabled><span><u>S</u>et Current</span></button>
              </div>
            </div>
          </div>
          <footer><button class="ok">OK</button><button>Cancel</button><button disabled><span><u>A</u>pply</span></button><button><span><u>H</u>elp</span></button></footer>
          <svg class="ink" viewBox="600 229 704 574" aria-hidden="true"><path d="M560 282C568 274 583 272 589 275C595 282 594 292 582 303L601 304M603 281C602 290 605 297 609 300C618 306 650 304 655 299C664 293 668 285 661 283C640 281 615 281 603 284M577 561L590 561Q596 566 583 572Q597 573 594 580Q587 585 578 584M585 594L586 609L609 609M602 598L602 620M619 559L674 560Q673 572 667 577Q655 585 627 583Q612 583 610 572Q612 562 623 560M649 580Q660 585 690 578C720 570 750 567 787 567L850 569C860 580 858 590 845 594C840 603 830 600 810 600C780 603 740 607 703 607C660 606 637 604 630 598C624 590 640 577 655 577L672 577"/></svg>
        </section>
      </div>
      <div class="scroll-v"><svg><use href="#chev"/></svg><i class="thumb"></i><svg class="down"><use href="#chev"/></svg></div>
    </div>
    <div class="scroll-h"><svg class="left"><use href="#chev"/></svg><i class="thumb"></i><svg class="right"><use href="#chev"/></svg></div>
    <div class="command">
      <div class="cmd-side"><i class="dots"></i><svg class="x"><use href="#x"/></svg><svg class="i16" viewBox="0 0 16 16" aria-hidden="true"><path d="M1 15l8-8" stroke="#ddd" stroke-width="3"/><path d="M9 8Q6 3 11 0l0 3 2 2 3 0Q14 10 9 8z" fill="#ddd"/></svg></div>
      <div class="cmd-main">
        <pre>Command: _.erase 1103 found
Command: OPTIONS</pre>
        <label class="cmd-in"><svg viewBox="0 0 28 14" aria-hidden="true"><path d="M.5 1.500h15v11H.5z" fill="#fff" stroke="#555"/><path d="M0 1h16v2H0z" fill="#555"/><path d="M3 5l2 2-2 2M7 10.500h5" fill="none" stroke="#555"/><path d="M19 5h8l-4 4z" fill="#555"/></svg><input type="text" aria-label="Command" placeholder="Type a command"></label>
      </div>
      <svg class="ink" viewBox="274 917 300 62" aria-hidden="true"><path d="M342 938L450 937C465 938 470 943 463 949C455 956 425 960 393 961C360 961 340 959 333 957C322 953 320 940 322 932C330 929 345 929 350 938M472 947Q472 943 480 942Q490 938 492 931Q492 945 489 967M472 971H507"/></svg>
    </div>
  </section>

  <aside class="properties">
    <h2 class="grip"><i></i>PROPERTIES</h2>
    <button class="selection">No selection</button>
    <h3>General</h3>
    <table>
      <tr><th>Color</th><td><i class="sw"></i>ByLayer</td></tr>
      <tr><th>Layer</th><td>0</td></tr>
      <tr><th>Linety...</th><td><i class="ln"></i>ByLayer</td></tr>
      <tr><th>Linety...</th><td>1.0000</td></tr>
      <tr><th>Linew...</th><td><i class="ln"></i>ByLayer</td></tr>
      <tr><th>Trans...</th><td>ByLayer</td></tr>
      <tr><th>Thick...</th><td>0.0000</td></tr>
    </table>
    <h3>Plot style</h3>
    <table>
      <tr><th>Plot s...</th><td class="ro">ByColor</td></tr>
      <tr><th>Plot s...</th><td>gbga.ctb</td></tr>
      <tr><th>Plot t...</th><td class="ro">Model</td></tr>
      <tr><th>Plot t...</th><td class="ro">Color dependent</td></tr>
    </table>
    <h3>View</h3>
    <table>
      <tr><th>Cente...</th><td class="ro">1134.9714</td></tr>
      <tr><th>Cente...</th><td class="ro">614.6799</td></tr>
      <tr><th>Cente...</th><td class="ro">0.0000</td></tr>
      <tr><th>Height</th><td class="ro">1811.2445</td></tr>
      <tr><th>Width</th><td class="ro">3369.5219</td></tr>
    </table>
    <h3>Misc</h3>
    <table>
      <tr><th>Anno...</th><td>1:1</td></tr>
      <tr><th>UCS i...</th><td>Yes</td></tr>
      <tr><th>UCS i...</th><td>Yes</td></tr>
      <tr><th>UCS...</th><td class="ro">No</td></tr>
      <tr><th>UCS...</th><td></td></tr>
    </table>
  </aside>
</main>

<nav class="tabs layouts" aria-label="Layouts">
  <button class="burger" aria-label="Layout menu"><svg class="i16"><use href="#menu"/></svg></button>
  <a class="on" href="#model">Model</a><a href="#a0">A0_</a><i class="slash"></i><a href="#a1v">A1 (V)_</a><i class="slash"></i><a href="#a1vm">A1 (V)_Modified</a><i class="slash"></i><a href="#a1">A1_</a><i class="slash"></i><a href="#a1m">A1_Modified</a><i class="slash"></i><a href="#a2">A2_</a><i class="slash"></i><a href="#a3">A3_</a><i class="slash"></i><a href="#a4">A4_</a><i class="slash"></i><a href="#a4p">A4_Portrait</a><i class="slash"></i>
  <button aria-label="New layout"><svg class="i16"><use href="#plus"/></svg></button><i class="slash"></i>
</nav>
</body>
</html>
```
FILE: styles.css
```css
:root {
  --dark: #222831;
  --panel: #3b4453;
  --deep: #2f3542;
  --field: #4a5567;
  --grey: #737985;
}
* { box-sizing: border-box; }
body {
  margin: 0;
  height: 100vh;
  display: flex;
  flex-direction: column;
  overflow: hidden;
  background: var(--dark);
  color: #f2f2f2;
  font: 11px/15px "Noto Sans", "Open Sans", sans-serif;
}
button, input { font: inherit; color: inherit; border: 0; padding: 0; margin: 0; background: none; }
a { color: inherit; text-decoration: none; }
h1, h2, h3, ul, p, pre { margin: 0; padding: 0; font: inherit; list-style: none; }
svg { fill: none; stroke: none; flex: none; display: block; }
.defs { position: absolute; width: 0; height: 0; }
.i16 { width: 16px; height: 16px; overflow: visible; }
.i32 { width: 32px; height: 32px; }
svg:has(> use) { stroke: currentColor; }
.tri { flex: none; width: 0; height: 0; border: 4px solid transparent; border-top: 5px solid #ddd; border-bottom: 0; }
.account .tri, .menu .tri { border-width: 4px 3px 0; }
.account .right { border: 4px solid transparent; border-left: 5px solid #ddd; border-right: 0; }
.thumb { background: #cdcdcd; }

/* title bar */
.titlebar { height: 30px; flex: none; display: flex; align-items: center; padding: 0 0 8px 7px; }
.app { display: flex; height: 18px; align-items: center; background: #7d0a2a; color: #fff; border-left: 2px solid #f58; }
.app b { background: #e5144c; width: 19px; height: 18px; font: bold 13px/18px "Liberation Sans", sans-serif; }
.app i { width: 19px; font: bold 9px/18px "Liberation Sans", sans-serif; }
.app-tri { margin: 0 12px 0 3px; }
.quick { display: flex; gap: 6px; padding-right: 8px; border-right: 1px solid #474f5c; }
.q1 { width: 220px; height: 18px; }
.q2 { width: 56px; height: 18px; }
.workspace { display: flex; align-items: center; gap: 2px; width: 178px; height: 20px; margin: 0 6px 0 4px; padding: 0 4px 0 3px; background: #3d4454; white-space: nowrap; }
.workspace span { flex: 1; text-align: left; }
.bar { width: 8px; height: 8px; }
.share { display: flex; gap: 4px; align-items: center; margin-left: 7px; color: #9bd2f7; }
h1 { display: flex; gap: 15px; margin-left: 213px; white-space: nowrap; }
.account { display: flex; align-items: center; gap: 6px; margin-left: auto; padding-right: 84px; flex: none; }
.search { width: 178px; height: 20px; padding: 0 2px; background: #465063; }
.search::placeholder { color: #a9b0bc; font-style: italic; opacity: 1; }
.name { width: 78px; }
.ads { margin-left: 5px; }
.vsep { width: 1px; height: 18px; background: #474f5c; margin: 0 3px 0 2px; }
.help { width: 16px; height: 16px; border-radius: 8px; background: #ddd; color: #222831; font: bold 12px/16px "Liberation Sans", sans-serif; text-align: center; }
.last { margin-left: 2px; }

/* ribbon tabs */
.menu { height: 20px; flex: none; display: flex; align-items: center; gap: 1px; color: #c6c9ce; }
.menu a { padding: 2px 10px 3px; }
.menu a:first-child { padding-left: 5px; background: var(--panel); color: #fff; }
.mini { width: 15px; height: 8px; margin: 0 3px 0 20px; background: linear-gradient(#555c68, #555c68) center / 4px 2px no-repeat, #b9bcc1; }

/* ribbon */
.ribbon { height: 99px; flex: none; display: flex; background: var(--panel); color: var(--grey); --blue: currentColor; --pencil: currentColor; --tip: currentColor; }
.panel { flex: none; display: flex; flex-direction: column; border-right: 1px solid #262c36; }
.tools { height: 77px; padding-top: 5px; display: grid; align-items: start; }
.panel h2 { height: 22px; display: flex; gap: 6px; align-items: center; justify-content: center; color: #fff; position: relative; }
.big { display: flex; flex-direction: column; align-items: center; height: 72px; padding-top: 3px; line-height: 15px; background: #3d4250; }
.big svg { margin-bottom: 3px; }
.ribbon .tri { border-width: 4px 3px 0; border-top-color: #b4b8bf; }
.ribbon h2 .tri { border-width: 5px 4px 0; border-top-color: #ddd; }
.big .tri { margin-top: 2px; }
.col { display: flex; flex-direction: column; }
.row { display: flex; }
.col button { height: 24px; display: flex; align-items: center; gap: 6px; padding: 0 4px 1px 3px; white-space: nowrap; }
.draw { width: 214px; } .draw .tools { grid-template-columns: 32px 51px 50px 43px 36px; }
.modify { width: 234px; } .modify .tools { grid-template-columns: 68px 66px 70px 24px; padding-left: 4px; }
.end .tri { margin-left: auto; }
.annot { width: 189px; } .annot .tools { grid-template-columns: 48px 58px 78px; }
.annot .col { padding-left: 3px; }
.layer { width: 272px; } .layer .tools { grid-template-columns: 60px 208px; padding-left: 2px; }
.layer .row button { padding: 0 4px 1px; }
.block { width: 162px; } .block .tools { grid-template-columns: 42px 118px; padding-left: 1px; }
.props { width: 264px; } .props .tools { grid-template-columns: 58px 24px 178px; padding-left: 3px; }
.groups { width: 69px; } .groups .tools { grid-template-columns: 40px 24px; padding-left: 3px; }
.utils { width: 98px; } .utils .tools { grid-template-columns: 71px 24px; padding-left: 1px; }
.clip { width: 138px; border: 0; } .clip .tools { grid-template-columns: 54px 84px; }
.clip .row button { padding-right: 6px; gap: 4px; }
.col .combo { height: 22px; margin: 1px 0; padding: 0 3px 1px 4px; background: var(--field); border: 1px solid #2b313d; color: #8d94a1; }
.combo span { flex: 1; text-align: left; }
.ribbon .combo .tri { border-width: 5px 4px 0; border-top-color: #ddd; }
.col .combo.off { background: #414958; border-color: #383f4c; }
.combo.off .tri { opacity: .5; }
.state { width: 74px; height: 18px; }
.combo .sw { width: 16px; height: 16px; background: #737985; }
.combo .ln { width: 64px; height: 1px; background: #aab0ba; margin-right: -4px; }
.col .sel { background: #3f5266; outline: 1px solid #5b9bd0; outline-offset: -1px; }
.corner { position: absolute; right: 4px; bottom: 7px; width: 6px; height: 6px; }

/* file and layout tabs */
.tabs { height: 27px; flex: none; display: flex; align-items: center; padding-left: 8px; gap: 7px; }
.tabs a { padding: 0 1px; white-space: nowrap; }
.tabs .burger { margin-right: 3px; }
.slash { width: 8px; height: 16px; background: linear-gradient(to bottom right, transparent 0 46%, #596171 46% 54%, transparent 54%); }
.tabs a.on { align-self: stretch; display: flex; align-items: center; gap: 8px; padding: 0 12px 0 16px; font-weight: bold; background: var(--panel); clip-path: polygon(9px 0, 100% 0, calc(100% - 9px) 100%, 0 100%); }
.x { width: 10px; height: 10px; color: #c6c9ce; }
.layouts { height: 24px; gap: 8px; }
.tabs.layouts .on { padding: 0 18px 0 15px; margin-right: -3px; }

/* work area */
.work { flex: 1; min-height: 0; display: flex; background: var(--panel); border-top: 1px solid #2c323d; }
.palette { width: 274px; flex: none; display: flex; padding-top: 5px; --blue: #6cbcf5; --pencil: #f8d27c; --tip: #f2555a; }
.pal-main { width: 249px; margin-bottom: 6px; border-bottom: 1px solid #2c323d; border-radius: 0 0 4px 0; }
.grip { height: 20px; display: flex; align-items: center; gap: 6px; padding-bottom: 3px; background: var(--deep); border-radius: 0 4px 0 0; }
.grip i { width: 3px; height: 10px; margin-right: -2px; background: repeating-linear-gradient(#aaa 0 1px, transparent 1px 3px); }
.pal-main ul { padding-top: 3px; }
.pal-main li { height: 22px; display: flex; align-items: center; gap: 2px; padding-left: 6px; }
.pal-main .sel { background: #292e39; box-shadow: inset 0 1px var(--panel), inset 0 -1px var(--panel); }
.vtabs { padding-top: 22px; width: 19px; display: flex; flex-direction: column; }
.vtabs button { height: 107px; writing-mode: vertical-rl; transform: rotate(180deg); background: var(--deep); border: 1px solid #272c37; border-radius: 4px 0 0 4px; color: #b9bdc5; line-height: 15px; }
.vtabs .on { background: var(--panel); color: #fff; border-right-color: var(--panel); }

.center { flex: 1; min-width: 0; display: flex; flex-direction: column; padding-top: 3px; }
.view { flex: 1; min-height: 0; display: flex; }
.canvas { flex: 1; position: relative; background: #1f282f; }
.scroll-v { width: 17px; background: #f0f0f0; display: flex; flex-direction: column; align-items: center; padding: 4px 0; }
.scroll-v .thumb { width: 15px; height: 17px; margin: 3px 0 auto; }
.scroll-h { height: 17px; flex: none; background: #f0f0f0; display: flex; align-items: center; padding: 0 20px 0 3px; }
.scroll-h .thumb { width: 17px; height: 15px; margin: 0 4px 0 auto; }
.scroll-v svg, .scroll-h svg, .vs svg, .hs svg { width: 10px; height: 10px; }
.down { transform: rotate(180deg); } .left { transform: rotate(-90deg); } .right { transform: rotate(90deg); }
.mdi { position: absolute; right: 6px; top: 9px; }
.mdi svg { width: 56px; height: 12px; }
.ucs { position: absolute; left: 213px; bottom: 107px; width: 80px; height: 80px; }

.command { position: relative; flex: none; height: 60px; margin: 4px 0 4px; display: flex; background: #262c36; }
.cmd-side { width: 25px; background: var(--deep); display: flex; flex-direction: column; align-items: center; justify-content: space-between; padding: 5px 0 6px; }
.dots { width: 17px; height: 5px; background: repeating-linear-gradient(90deg, transparent 0 2px, var(--deep) 2px 3px), repeating-linear-gradient(#ccc 0 2px, transparent 2px 3px); }
.cmd-main { flex: 1; display: flex; flex-direction: column; gap: 1px; padding: 1px 1px 1px 0; font: 12px/15px "Liberation Mono", monospace; }
.cmd-main pre { flex: 1; padding: 7px 2px 0; background: #c8c8c8; color: #000; font-family: "DejaVu Sans Mono", monospace; font-size: 12px; }
.cmd-in { height: 20px; display: flex; align-items: center; gap: 4px; padding-left: 4px; background: #fff; }
.cmd-in svg { width: 28px; height: 14px; }
.cmd-in input { flex: 1; color: #000; font-family: "DejaVu Sans Mono", monospace; }
.cmd-in input::placeholder { color: #777; font-style: italic; opacity: 1; }

/* properties */
.properties { width: 169px; flex: none; overflow: hidden; margin: 5px 0 6px; padding-left: 10px; border-bottom: 1px solid #2c323d; }
.properties .grip { margin-left: -6px; padding-left: 6px; border-radius: 4px 0 0 0; gap: 8px; }
.selection { display: block; width: 100%; height: 24px; margin: 12px 0 3px; padding-left: 4px; margin-left: -1px; text-align: left; font-size: 12px; background: #4f5b6e; border: 1px solid #2c323d; border-right: 0; }
.properties h3 { height: 20px; margin: 0 0 0 4px; padding: 2px 7px; background: var(--deep); font-weight: bold; font-size: 12px; }
.properties table { width: 180px; margin: 0 0 3px 21px; border-spacing: 0; table-layout: fixed; }
.properties tr { height: 19px; }
.properties th, .properties td { height: 19px; padding: 0; border: 0 solid #2f3542; border-width: 0 0 1px 1px; font-weight: normal; text-align: left; white-space: nowrap; line-height: 18px; }
.properties th { width: 51px; padding-left: 6px; color: #d4d6da; }
.properties td { padding-left: 3px; }
.properties .ro { color: #949aa5; }
.properties td .sw { display: inline-block; width: 14px; height: 14px; margin-right: 6px; background: #fff; vertical-align: middle; }
.properties td .ln { display: inline-block; width: 66px; height: 1px; margin-right: 4px; background: #fff; vertical-align: middle; }

/* options dialog */
.dialog { position: absolute; left: 326px; top: 49px; width: 704px; height: 574px; display: flex; flex-direction: column; background: #f0f0f0; color: #000; font: 11px/14px "Liberation Sans", Arial, sans-serif; box-shadow: 0 4px 16px #0008; }
.dialog header { height: 30px; flex: none; display: flex; align-items: center; gap: 5px; padding: 0 9px; background: #fff; font: 12px/16px "Noto Sans", sans-serif; }
.close { margin-left: auto; width: 12px; height: 12px; }
.current { display: flex; align-items: center; height: 28px; padding: 0 13px; gap: 6px; }
.current svg { width: 14px; height: 14px; }
.current span { width: 124px; }
.dtabs { display: flex; align-items: flex-end; height: 19px; padding-left: 12px; flex: none; position: relative; z-index: 1; margin-bottom: -1px; }
.dtabs button { height: 18px; padding: 0 4px 0 3px; margin-bottom: 1px; border: 1px solid #d9d9d9; border-left: 0; white-space: nowrap; }
.dtabs .on { height: 21px; width: 45px; margin-bottom: 0; background: #fff; border-left: 1px solid #d9d9d9; border-bottom: 0; padding: 0 9px 5px; text-align: left; }
.page { flex: 1; min-height: 0; margin: 0 14px 0 12px; padding: 11px 22px 0 11px; background: #fff; border: 1px solid #d9d9d9; }
.page p { margin-bottom: 5px; }
.cols { display: flex; gap: 16px; }
.tree { flex: 1; min-width: 0; height: 366px; border: 1px solid #828790; padding: 1px; }
.tree-top { display: flex; height: 345px; }
.tree ul { white-space: nowrap; }
.l1 { flex: 1; min-width: 0; overflow: hidden; background: repeating-linear-gradient(#888 0 1px, transparent 1px 2px) 8px 10px / 1px 100% no-repeat; }
.tree li { display: flex; align-items: center; gap: 3px; height: 20px; padding-left: 4px; }
.tree li svg { margin-right: 3px; height: 16px; }
.tree li .ex { width: 9px; height: 9px; flex: none; margin-right: 8px; border: 1px solid #919191; border-radius: 1px; background: linear-gradient(#3c5a9a, #3c5a9a) center / 5px 1px no-repeat, linear-gradient(#3c5a9a, #3c5a9a) center / 1px 5px no-repeat, #f6f6f6; position: relative; }
.tree li .open { background: linear-gradient(#3c5a9a, #3c5a9a) center / 5px 1px no-repeat, #f6f6f6; }
.ex::after { content: ""; position: absolute; left: 9px; top: 3px; width: 8px; border-top: 1px dotted #888; }
.tree .dim { color: #6d6d6d; }
.tree .nest { display: block; height: auto; padding-left: 23px; }
.l2 { background: repeating-linear-gradient(#888 0 1px, transparent 1px 2px) 8px 0 / 1px calc(100% - 10px) no-repeat; }
.tree .leaf { padding-left: 46px; background: repeating-linear-gradient(90deg, #888 0 1px, transparent 1px 2px) 31px 10px / 14px 1px no-repeat, repeating-linear-gradient(#888 0 1px, transparent 1px 2px) 31px 0 / 1px 10px no-repeat; }
mark { padding: 2px 1px; margin-left: -1px; background: #0078d7; color: #fff; outline: 1px dotted #000; }
.vs { width: 17px; display: flex; flex-direction: column; align-items: center; padding: 4px 0; background: #f0f0f0; }
.vs .thumb { width: 15px; height: 196px; margin: 3px 0 auto; }
.hs { height: 17px; display: flex; align-items: center; padding: 0 20px 0 3px; background: #f0f0f0; }
.hs .thumb { flex: 1; height: 15px; margin: 0 4px 0 9px; }
.side { width: 111px; height: 184px; margin-top: 1px; display: flex; flex-direction: column; justify-content: space-between; }
.side button, .dialog footer button { height: 21px; background: #e1e1e1; border: 1px solid #adadad; }
.dialog button:disabled { background: #ccc; border-color: #bfbfbf; color: #838383; }
.dialog footer { height: 40px; flex: none; display: flex; justify-content: flex-end; align-items: flex-start; gap: 8px; padding: 12px 13px 0; }
.dialog footer button { width: 73px; }
.dialog footer .ok { border: 2px solid #0078d7; }
.ink { position: absolute; left: 0; top: 0; width: 704px; height: 574px; overflow: visible; pointer-events: none; z-index: 2; }
.ink path { stroke: #f01010; stroke-width: 2; stroke-linecap: round; stroke-linejoin: round; }
.command .ink { width: 300px; height: 62px; }
```
